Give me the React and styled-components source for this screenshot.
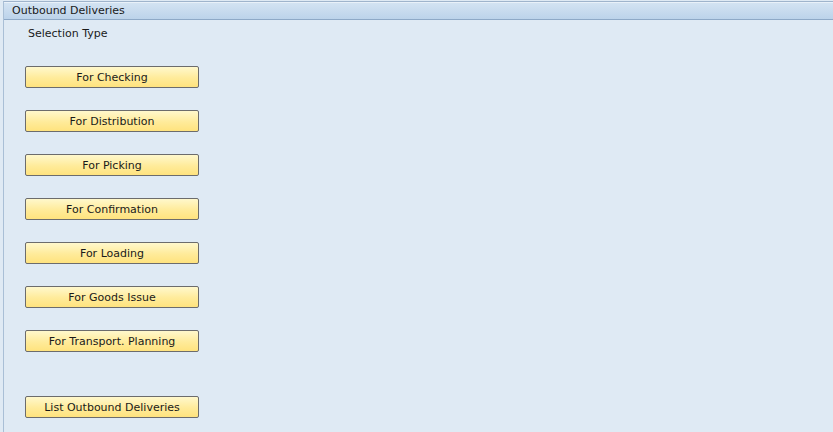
import React from 'react'
import styled, {createGlobalStyle} from 'styled-components'

const GlobalStyle = createGlobalStyle`
    html, body {
        margin: 0;
        padding: 0;
        background: #dfeaf4;
        font-family: "DejaVu Sans", "Liberation Sans", sans-serif;
    }
`

const buttons = [
    'For Checking',
    'For Distribution',
    'For Picking',
    'For Confirmation',
    'For Loading',
    'For Goods Issue',
    'For Transport. Planning',
]

export default function App() {
    return (
        <Page>
            <GlobalStyle />
            <Frame>
                <Header>Outbound Deliveries</Header>
                <Body>
                    <Label>Selection Type</Label>
                    <ButtonList>
                        {buttons.map(b => (
                            <Button key={b}>{b}</Button>
                        ))}
                    </ButtonList>
                    <Button $top={44}>List Outbound Deliveries</Button>
                </Body>
            </Frame>
        </Page>
    )
}

const Page = styled.div`
    width: 833px;
    height: 432px;
    padding-top: 1px;
    box-sizing: border-box;
    background: #dfeaf4;
    overflow: hidden;
`
const Frame = styled.div`
    margin-left: 3px;
    height: 431px;
    border-left: 1px solid #a9bfd6;
    border-top: 1px solid #9fb4cc;
    box-sizing: border-box;
`
const Header = styled.div`
    height: 16px;
    line-height: 15px;
    padding-left: 8px;
    font-size: 11px;
    color: #1a1a1a;
    background: linear-gradient(#d3e3f2, #bcd3ea);
    border-top: 1px solid #e9f1f9;
    border-bottom: 1px solid #8ea9c7;
`
const Body = styled.div`
    padding: 7px 0 0 21px;
`
const Label = styled.div`
    font-size: 11px;
    height: 14px;
    line-height: 14px;
    padding-left: 3px;
    color: #1a1a1a;
`
const ButtonList = styled.div`
    display: flex;
    flex-direction: column;
    gap: 22px;
    margin-top: 25px;
`
const Button = styled.button`
    display: block;
    width: 174px;
    height: 22px;
    margin-top: ${p => p.$top || 0}px;
    padding: 0;
    font-family: inherit;
    font-size: 11px;
    color: #1a1a1a;
    border: 1px solid #6c6c6c;
    border-radius: 2px;
    background: linear-gradient(#fff8cc, #ffeb9a 55%, #ffe37e);
    cursor: pointer;
`
